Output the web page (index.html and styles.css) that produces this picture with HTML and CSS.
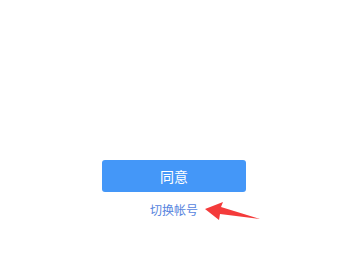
FILE: index.html
```html
<html>

<head>
    <title>授权</title>
    <link rel="stylesheet" href="styles.css">
</head>

<body>
    <main class="page">
        <div class="actions">
            <button class="btn-agree">同意</button>
            <a class="switch-link" href="#">切换帐号</a>
        </div>
    </main>
    <svg class="arrow" width="70" height="30" viewBox="0 0 70 30">
        <polygon points="10,14 28,7 26,12 65,24 25,19 24,25" fill="#f43b3b" />
    </svg>
</body>

</html>
```

FILE: styles.css
```css
body {
    margin: 0;
    background: #fff;
    font-family: "Noto Sans CJK SC", "Noto Sans", sans-serif;
}

.page {
    width: 348px;
    height: 257px;
    display: flex;
    justify-content: center;
}

.actions {
    width: 144px;
    padding-top: 160px;
    display: flex;
    flex-direction: column;
    align-items: center;
}

.btn-agree {
    width: 144px;
    height: 32px;
    border: none;
    border-radius: 3px;
    background: #4497f8;
    color: #fff;
    font-family: inherit;
    font-size: 14px;
    padding: 0;
}

.switch-link {
    margin-top: 10px;
    font-size: 12px;
    line-height: 16px;
    color: #5684de;
    text-decoration: none;
}

.arrow {
    position: absolute;
    left: 195px;
    top: 195px;
}
```
